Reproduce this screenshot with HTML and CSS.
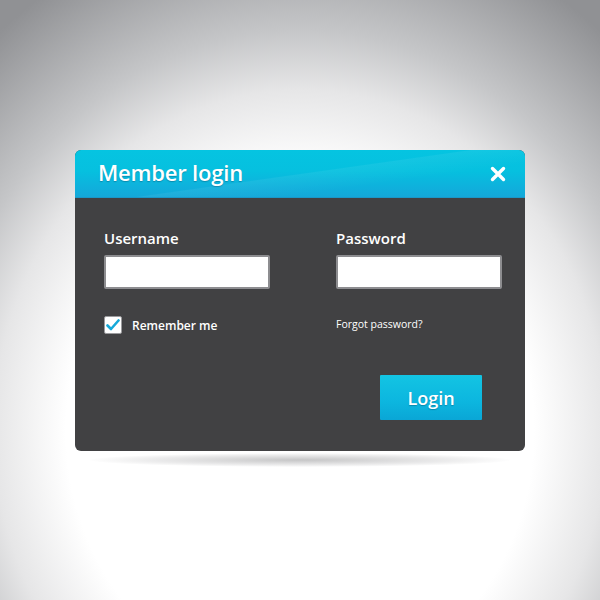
FILE: index.html
```html
<!DOCTYPE html>
<html>
<head>
<meta charset="utf-8">
<link rel="stylesheet" href="styles.css">
</head>
<body>
<div class="stage">
  <div class="card">
    <div class="card-head">
      <h1 class="title">Member login</h1>
      <span class="close" aria-label="close">
        <svg width="16" height="16" viewBox="0 0 16 16"><path d="M2.5 2.5 L13.5 13.5 M13.5 2.5 L2.5 13.5" stroke="#fff" stroke-width="3.4" stroke-linecap="round"/></svg>
      </span>
    </div>
    <div class="card-body">
      <div class="fields">
        <div class="field">
          <label class="label">Username</label>
          <div class="input"></div>
        </div>
        <div class="field">
          <label class="label">Password</label>
          <div class="input"></div>
        </div>
      </div>
      <div class="options">
        <div class="remember">
          <span class="checkbox">
            <svg width="14" height="12" viewBox="0 0 14 12"><path d="M1.5 6.5 L5 10 L12.5 1.5" fill="none" stroke="#16a9d9" stroke-width="2.6" stroke-linecap="round" stroke-linejoin="round"/></svg>
          </span>
          <span class="remember-text">Remember me</span>
        </div>
        <div class="forgot">Forgot password?</div>
      </div>
      <div class="actions">
        <button class="btn">Login</button>
      </div>
    </div>
  </div>
  <div class="shadow"></div>
</div>
</body>
</html>
```
FILE: styles.css
```css
html, body {
  margin: 0;
  padding: 0;
}
body {
  width: 600px;
  height: 600px;
  overflow: hidden;
  font-family: "Open Sans", "DejaVu Sans", sans-serif;
}
.stage {
  width: 600px;
  height: 600px;
  box-sizing: border-box;
  padding-top: 150px;
  display: flex;
  flex-direction: column;
  align-items: center;
  background:
    radial-gradient(ellipse 360px 400px at 300px 430px, #ffffff 0%, #ffffff 65%, #e6e6e7 85%, #c5c6c8 100%, #909194 130%);
}
.card {
  width: 450px;
  border-radius: 6px;
  overflow: hidden;
  background: #414143;
}
.card-head {
  height: 48px;
  box-sizing: border-box;
  display: flex;
  align-items: center;
  justify-content: space-between;
  padding: 0 19px 3px 23px;
  background:
    linear-gradient(172deg, rgba(255,255,255,0) 0%, rgba(255,255,255,0) 50%, rgba(255,255,255,0.06) 51%, rgba(255,255,255,0) 70%),
    linear-gradient(180deg, #05c4e1 0%, #06c0df 45%, #0fb0dc 80%, #14a8d9 100%);
  border-bottom: 1px solid #1a98c8;
}
.title {
  margin: 0;
  color: #fff;
  font-size: 22px;
  font-weight: 600;
  letter-spacing: -0.2px;
  text-shadow: 0 1px 1px rgba(0, 60, 90, 0.35);
}
.close {
  display: flex;
  width: 16px;
  height: 16px;
  margin-top: 3px;
}
.card-body {
  padding: 30px 23px 31px 29px;
}
.fields {
  display: flex;
  gap: 66px;
}
.field {
  width: 166px;
  display: flex;
  flex-direction: column;
}
.label {
  color: #fff;
  font-size: 15px;
  font-weight: 600;
  line-height: 20px;
  margin-bottom: 7px;
}
.input {
  height: 34px;
  box-sizing: border-box;
  background: #fff;
  border: 2px solid #8d8d90;
  border-radius: 2px;
}
.options {
  display: flex;
  gap: 66px;
  margin-top: 27px;
  align-items: center;
}
.remember {
  width: 166px;
  display: flex;
  align-items: center;
  gap: 10px;
}
.checkbox {
  width: 18px;
  height: 18px;
  box-sizing: border-box;
  background: #fff;
  border: 1px solid #9b9b9e;
  border-radius: 2px;
  display: flex;
  align-items: center;
  justify-content: center;
}
.remember-text {
  color: #fff;
  font-size: 12px;
  font-weight: 600;
}
.forgot {
  color: #fff;
  font-size: 10.5px;
  margin-top: -3px;
}
.actions {
  display: flex;
  justify-content: flex-end;
  margin-top: 41px;
  padding-right: 20px;
}
.btn {
  width: 102px;
  height: 45px;
  border: none;
  border-radius: 1px;
  background: linear-gradient(180deg, #13c4e3 0%, #0cb6df 60%, #0aa6d6 100%);
  color: #fff;
  font-family: "Open Sans", "DejaVu Sans", sans-serif;
  font-size: 18px;
  font-weight: 600;
  text-shadow: 0 1px 1px rgba(0, 60, 90, 0.35);
  padding: 0;
}
.shadow {
  width: 420px;
  height: 14px;
  margin-top: 2px;
  border-radius: 50%;
  background: radial-gradient(ellipse at center, rgba(150,150,152,0.55) 0%, rgba(190,190,192,0.3) 50%, rgba(255,255,255,0) 72%);
}
```
